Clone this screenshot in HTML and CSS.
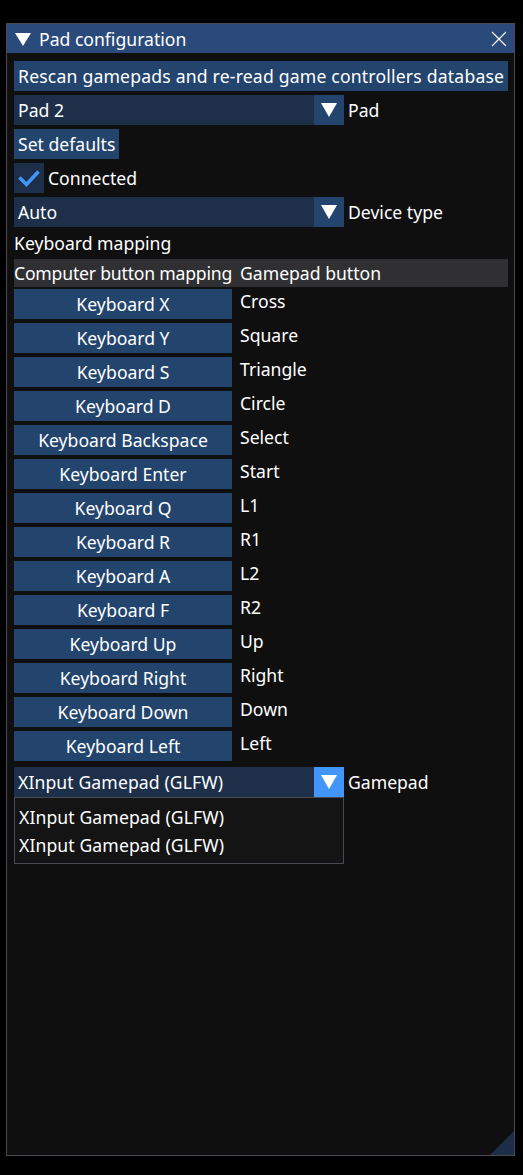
FILE: index.html
```html
<!DOCTYPE html>
<html>
<head>
<meta charset="utf-8">
<link rel="stylesheet" href="styles.css">
</head>
<body>
<div class="window">
  <div class="titlebar">
    <svg class="tri" width="16" height="14" viewBox="0 0 16 14"><polygon points="0,0 16,0 8,13" fill="#fff"/></svg>
    <span class="title">Pad configuration</span>
    <svg class="close" width="16" height="16" viewBox="0 0 16 16"><path d="M1 1 L15 15 M15 1 L1 15" stroke="#fff" stroke-width="1.2" fill="none"/></svg>
  </div>
  <div class="content">
    <div class="btn btn-wide">Rescan gamepads and re-read game controllers database</div>
    <div class="combo-row">
      <div class="combo">
        <span class="combo-value">Pad 2</span>
        <span class="combo-arrow"><svg width="16" height="14" viewBox="0 0 16 14"><polygon points="0,0 16,0 8,14" fill="#fff"/></svg></span>
      </div>
      <span class="label">Pad</span>
    </div>
    <div class="btn">Set defaults</div>
    <div class="check-row">
      <span class="checkbox"><svg width="30" height="30" viewBox="0 0 30 30"><path d="M5.5 14.5 L12.5 21.5 L24.5 8.5" stroke="#4296fa" stroke-width="3.6" fill="none" stroke-linecap="butt" stroke-linejoin="miter"/></svg></span>
      <span class="label">Connected</span>
    </div>
    <div class="combo-row">
      <div class="combo">
        <span class="combo-value">Auto</span>
        <span class="combo-arrow"><svg width="16" height="14" viewBox="0 0 16 14"><polygon points="0,0 16,0 8,14" fill="#fff"/></svg></span>
      </div>
      <span class="label">Device type</span>
    </div>
    <div class="text">Keyboard mapping</div>
    <div class="table">
      <div class="th th-first">Computer button mapping</div>
      <div class="th">Gamepad button</div>
      <div class="td"><div class="kbtn">Keyboard X</div></div><div class="td txt">Cross</div>
      <div class="td"><div class="kbtn">Keyboard Y</div></div><div class="td txt">Square</div>
      <div class="td"><div class="kbtn">Keyboard S</div></div><div class="td txt">Triangle</div>
      <div class="td"><div class="kbtn">Keyboard D</div></div><div class="td txt">Circle</div>
      <div class="td"><div class="kbtn">Keyboard Backspace</div></div><div class="td txt">Select</div>
      <div class="td"><div class="kbtn">Keyboard Enter</div></div><div class="td txt">Start</div>
      <div class="td"><div class="kbtn">Keyboard Q</div></div><div class="td txt">L1</div>
      <div class="td"><div class="kbtn">Keyboard R</div></div><div class="td txt">R1</div>
      <div class="td"><div class="kbtn">Keyboard A</div></div><div class="td txt">L2</div>
      <div class="td"><div class="kbtn">Keyboard F</div></div><div class="td txt">R2</div>
      <div class="td"><div class="kbtn">Keyboard Up</div></div><div class="td txt">Up</div>
      <div class="td"><div class="kbtn">Keyboard Right</div></div><div class="td txt">Right</div>
      <div class="td"><div class="kbtn">Keyboard Down</div></div><div class="td txt">Down</div>
      <div class="td"><div class="kbtn">Keyboard Left</div></div><div class="td txt">Left</div>
    </div>
    <div class="combo-group">
      <div class="combo-row">
        <div class="combo">
          <span class="combo-value wide">XInput Gamepad (GLFW)</span>
          <span class="combo-arrow active"><svg width="16" height="14" viewBox="0 0 16 14"><polygon points="0,0 16,0 8,14" fill="#fff"/></svg></span>
        </div>
        <span class="label">Gamepad</span>
      </div>
      <div class="popup">
        <div class="item">XInput Gamepad (GLFW)</div>
        <div class="item">XInput Gamepad (GLFW)</div>
      </div>
    </div>
  </div>
  <svg class="grip" width="24" height="24" viewBox="0 0 24 24"><polygon points="24,0 24,24 0,24" fill="#1b2d47"/></svg>
</div>
</body>
</html>
```

FILE: styles.css
```css
html, body {
  margin: 0;
  padding: 0;
  background: #000;
}
body {
  font-family: "Noto Sans", "Open Sans", sans-serif;
  font-size: 17.6px;
  line-height: 24px;
  color: #ffffff;
}
.window {
  position: relative;
  box-sizing: border-box;
  margin: 23px 0 0 6px;
  width: 509px;
  height: 1133px;
  border: 1px solid #4a4a52;
  background: #0f0f0f;
}
.titlebar {
  height: 29px;
  background: #294a7a;
  display: flex;
  align-items: center;
  padding-left: 8px;
  padding-right: 8px;
}
.titlebar .tri {
  margin-top: 2px;
  margin-right: 8px;
}
.titlebar .title {
  flex: 1;
  line-height: 24px;
  margin-top: 1px;
}
.titlebar .close {
  margin-right: -1px;
  margin-top: 1px;
}
.content {
  padding: 8px 6px 8px 7px;
  display: flex;
  flex-direction: column;
  align-items: flex-start;
  gap: 4px;
}
.btn {
  background: #23456d;
  padding: 3px 4px;
  line-height: 24px;
  white-space: nowrap;
}
.btn-wide {
  letter-spacing: 0.19px;
}
.combo-row {
  display: flex;
  align-items: center;
}
.combo {
  width: 330px;
  height: 30px;
  display: flex;
  background: #1d2f49;
}
.combo-value {
  flex: 1;
  padding: 3px 4px;
  line-height: 24px;
  white-space: nowrap;
}
.combo-value.wide,
.item {
  letter-spacing: 0.1px;
}
.combo-arrow {
  width: 30px;
  height: 30px;
  background: #23456d;
  display: flex;
  align-items: center;
  justify-content: center;
}
.combo-arrow.active {
  background: #4296fa;
}
.label {
  margin-left: 4px;
  line-height: 24px;
}
.check-row {
  display: flex;
  align-items: center;
}
.checkbox {
  width: 30px;
  height: 30px;
  background: #1d2f49;
  display: block;
}
.checkbox svg {
  display: block;
}
.text {
  line-height: 24px;
}
.table {
  align-self: stretch;
  display: grid;
  grid-template-columns: 226px 1fr;
}
.th {
  background: #303033;
  padding: 2px 0;
  line-height: 24px;
  white-space: nowrap;
}
.th-first {
  letter-spacing: -0.2px;
}
.td {
  padding: 2px 0;
}
.td.txt {
  line-height: 24px;
}
.kbtn {
  width: 218px;
  height: 30px;
  line-height: 30px;
  text-align: center;
  background: #23456d;
  white-space: nowrap;
}
.combo-group {
  display: flex;
  flex-direction: column;
}
.popup {
  box-sizing: border-box;
  width: 330px;
  height: 67px;
  border: 1px solid #4a4a52;
  background: #141414;
  padding: 7px 4px;
  display: flex;
  flex-direction: column;
  gap: 4px;
}
.item {
  line-height: 24px;
  white-space: nowrap;
}
.grip {
  position: absolute;
  right: 0;
  bottom: 0;
}
```
